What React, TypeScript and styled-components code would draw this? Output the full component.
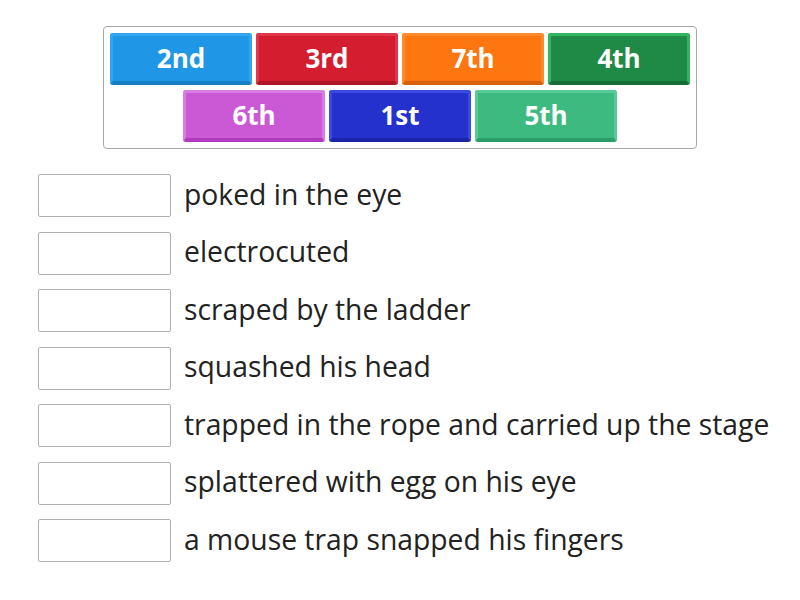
import React from "react";
import styled, { createGlobalStyle } from "styled-components";

const Global = createGlobalStyle`
  html, body { margin: 0; padding: 0; background: #fff; }
  body { font-family: "Open Sans", "Liberation Sans", sans-serif; }
`;

const Page = styled.div`
  width: 800px;
  height: 600px;
  box-sizing: border-box;
  padding-top: 26px;
  display: flex;
  flex-direction: column;
  align-items: center;
`;

const Bank = styled.div`
  width: 594px;
  box-sizing: border-box;
  border: 1px solid #a8a8a8;
  border-radius: 4px;
  padding: 6px;
  display: flex;
  flex-wrap: wrap;
  justify-content: center;
  column-gap: 4px;
  row-gap: 5px;
`;

const Tile = styled.div<{ $bg: string; $light: string; $dark: string }>`
  width: 142px;
  height: 52px;
  box-sizing: border-box;
  border-radius: 3px;
  background: ${(p) => p.$bg};
  border-top: 3px solid ${(p) => p.$light};
  border-left: 3px solid ${(p) => p.$light};
  border-right: 3px solid ${(p) => p.$light};
  border-bottom: 4px solid ${(p) => p.$dark};
  display: flex;
  align-items: center;
  justify-content: center;
  color: #fff;
  font-weight: 700;
  font-size: 26px;
  padding-bottom: 2px;
`;

const List = styled.div`
  align-self: stretch;
  margin-top: 25px;
  padding-left: 38px;
  display: flex;
  flex-direction: column;
  gap: 14.5px;
`;

const Row = styled.div`
  display: flex;
  align-items: center;
  gap: 13px;
`;

const Slot = styled.div`
  width: 133px;
  height: 43px;
  box-sizing: border-box;
  border: 1px solid #b0b0b0;
  border-radius: 2px;
  flex-shrink: 0;
`;

const Label = styled.div`
  font-size: 28.3px;
  line-height: 38px;
  color: #222;
  white-space: nowrap;
  margin-top: -4px;
`;

const tiles = [
  { t: "2nd", bg: "#1f97e6", light: "#33a6ef", dark: "#167ec2" },
  { t: "3rd", bg: "#d51d30", light: "#e1354a", dark: "#b01525" },
  { t: "7th", bg: "#fd7610", light: "#ff8a2b", dark: "#d9600a" },
  { t: "4th", bg: "#1f8a46", light: "#32b65f", dark: "#166e37" },
  { t: "6th", bg: "#cb59d6", light: "#d97de2", dark: "#b23ac0" },
  { t: "1st", bg: "#2431cc", light: "#3b4ae0", dark: "#1a25a8" },
  { t: "5th", bg: "#3cba80", light: "#58ca96", dark: "#2c9c68" },
];

const items = [
  "poked in the eye",
  "electrocuted",
  "scraped by the ladder",
  "squashed his head",
  "trapped in the rope and carried up the stage",
  "splattered with egg on his eye",
  "a mouse trap snapped his fingers",
];

export default function App() {
  return (
    <>
      <Global />
      <Page>
        <Bank>
          {tiles.map((t) => (
            <Tile key={t.t} $bg={t.bg} $light={t.light} $dark={t.dark}>
              {t.t}
            </Tile>
          ))}
        </Bank>
        <List>
          {items.map((i) => (
            <Row key={i}>
              <Slot />
              <Label>{i}</Label>
            </Row>
          ))}
        </List>
      </Page>
    </>
  );
}
